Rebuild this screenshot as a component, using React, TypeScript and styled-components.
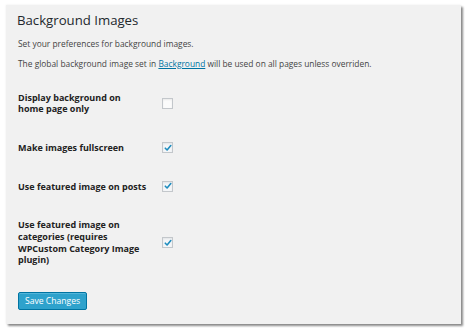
import React from "react";
import styled, { createGlobalStyle } from "styled-components";

const Global = createGlobalStyle`
  html, body { margin: 0; padding: 0; background: #ffffff; }
  body { font-family: "Open Sans", "Liberation Sans", sans-serif; }
`;

const Page = styled.div`
  padding: 5px 13px 12px 6px;
  width: 474px;
  box-sizing: border-box;
`;

const Panel = styled.div`
  width: 455px;
  box-sizing: border-box;
  background: #f1f1f1;
  padding: 6px 12px 14px 12px;
  box-shadow: 2px 2px 2px rgba(0, 0, 0, 0.45), 0 0 2px rgba(0, 0, 0, 0.08);
`;

const Title = styled.h2`
  margin: 0 0 8px -1px;
  font-size: 13.2px;
  line-height: 19px;
  font-weight: 400;
  color: #23282d;
`;

const Para = styled.p`
  margin: 0 0 8px 0;
  font-size: 8.4px;
  line-height: 12px;
  color: #444;
`;

const Link = styled.a`
  color: #0074a2;
  text-decoration: underline;
`;

const Table = styled.div`
  margin-top: 8px;
  display: flex;
  flex-direction: column;
`;

const Row = styled.div`
  display: grid;
  grid-template-columns: 144px 1fr;
  align-items: center;
  padding: 13.5px 0;
`;

const Label = styled.div`
  font-size: 9px;
  line-height: 11.7px;
  font-weight: 700;
  color: #222;
`;

const Cell = styled.div`
  display: flex;
  align-items: center;
`;

const Box = styled.span<{ $checked?: boolean }>`
  display: inline-flex;
  align-items: center;
  justify-content: center;
  width: 11px;
  height: 11px;
  box-sizing: border-box;
  border: 1px solid #c3c7cb;
  background: ${(p) => (p.$checked ? "#f4f6f8" : "#fbfbfb")};
  box-shadow: inset 0 1px 2px rgba(0, 0, 0, 0.07);
`;

const Button = styled.button`
  display: block;
  margin-top: 12px;
  width: 69px;
  height: 18px;
  padding: 0;
  border: 1px solid #0074a2;
  border-radius: 2px;
  background: #2ea2cc;
  color: #fff;
  font-family: "Open Sans", "Liberation Sans", sans-serif;
  font-size: 8.6px;
  line-height: 16px;
  box-shadow: inset 0 1px 0 rgba(120, 200, 230, 0.5);
`;

const Check = ({ checked }: { checked?: boolean }) => (
  <Box $checked={checked}>
    {checked && (
      <svg width="8" height="8" viewBox="0 0 8 8">
        <path d="M1.3 4.2 L3.1 6 L6.8 1.6" fill="none" stroke="#1e8cbe" strokeWidth="1.6" strokeLinecap="round" strokeLinejoin="round" />
      </svg>
    )}
  </Box>
);

const rows: { label: React.ReactNode; checked: boolean }[] = [
  { label: <>Display background on<br />home page only</>, checked: false },
  { label: <>Make images fullscreen</>, checked: true },
  { label: <>Use featured image on posts</>, checked: true },
  {
    label: (
      <>
        Use featured image on
        <br />
        categories (requires
        <br />
        WPCustom Category Image
        <br />
        plugin)
      </>
    ),
    checked: true,
  },
];

export default function App() {
  return (
    <Page>
      <Global />
      <Panel>
        <Title>Background Images</Title>
        <Para>Set your preferences for background images.</Para>
        <Para>
          The global background image set in <Link href="#">Background</Link> will be used on all pages unless overriden.
        </Para>
        <Table>
          {rows.map((r, i) => (
            <Row key={i}>
              <Label>{r.label}</Label>
              <Cell>
                <Check checked={r.checked} />
              </Cell>
            </Row>
          ))}
        </Table>
        <Button>Save Changes</Button>
      </Panel>
    </Page>
  );
}
